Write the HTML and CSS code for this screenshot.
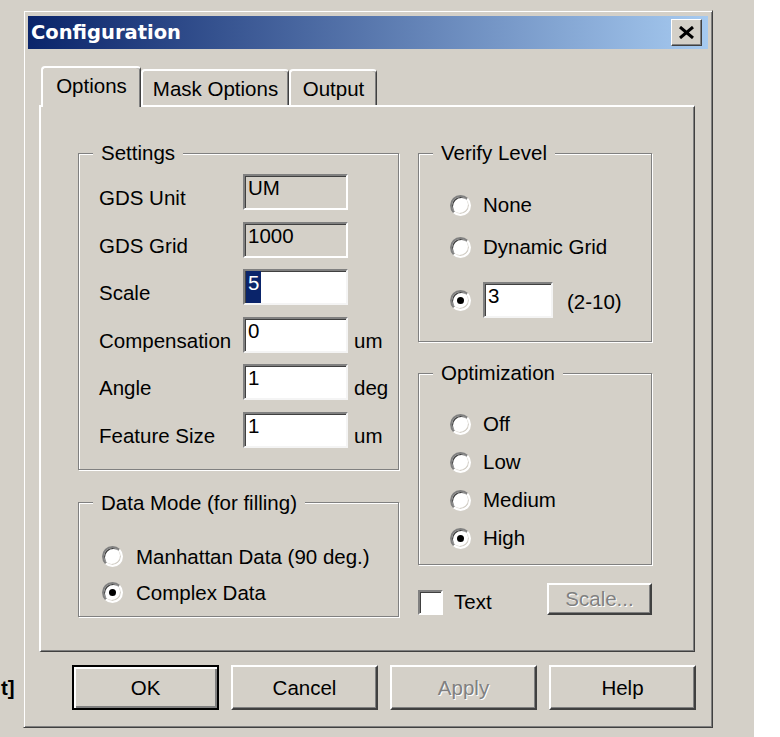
FILE: index.html
```html
<!DOCTYPE html>
<html lang="en">
<head>
<meta charset="UTF-8" />
<title>Configuration</title>
<link rel="stylesheet" href="styles.css">
</head>
<body>
<div class="desktop">
  <!-- Window behind the dialog -->
  <div class="behind"><span class="behind-text">t]</span></div>

  <div class="dialog">
    <div class="titlebar">
      <span class="title">Configuration</span>
      <div class="close-btn">
        <svg width="17" height="13" viewBox="0 0 17 13"><path d="M2 1 L15 12 M15 1 L2 12" stroke="#000" stroke-width="3" fill="none"/></svg>
      </div>
    </div>

    <!-- Tabs -->
    <div class="tabs">
      <div class="tab tab-options active">Options</div>
      <div class="tab tab-mask">Mask Options</div>
      <div class="tab tab-output">Output</div>
    </div>

    <div class="tab-panel">
      <div class="col-left">
        <fieldset class="group settings">
          <legend>Settings</legend>
          <div class="settings-grid">
            <span class="row-label">GDS Unit</span><div class="field disabled">UM</div><span></span>
            <span class="row-label">GDS Grid</span><div class="field disabled">1000</div><span></span>
            <span class="row-label">Scale</span><div class="field"><span class="selected">5</span></div><span></span>
            <span class="row-label">Compensation</span><div class="field">0</div><span class="unit">um</span>
            <span class="row-label">Angle</span><div class="field">1</div><span class="unit">deg</span>
            <span class="row-label">Feature Size</span><div class="field">1</div><span class="unit">um</span>
          </div>
        </fieldset>

        <fieldset class="group data-mode">
          <legend>Data Mode (for filling)</legend>
          <div class="radio-list">
            <div class="radio-row"><span class="radio"></span>Manhattan Data (90 deg.)</div>
            <div class="radio-row"><span class="radio checked"></span>Complex Data</div>
          </div>
        </fieldset>
      </div>

      <div class="col-right">
        <fieldset class="group verify">
          <legend>Verify Level</legend>
          <div class="radio-list">
            <div class="radio-row"><span class="radio"></span>None</div>
            <div class="radio-row"><span class="radio"></span>Dynamic Grid</div>
            <div class="radio-row level-row"><span class="radio checked"></span><div class="field level-field">3</div><span class="range">(2-10)</span></div>
          </div>
        </fieldset>

        <fieldset class="group optimization">
          <legend>Optimization</legend>
          <div class="radio-list">
            <div class="radio-row"><span class="radio"></span>Off</div>
            <div class="radio-row"><span class="radio"></span>Low</div>
            <div class="radio-row"><span class="radio"></span>Medium</div>
            <div class="radio-row"><span class="radio checked"></span>High</div>
          </div>
        </fieldset>

        <div class="text-row">
          <span class="checkbox"></span>
          <span class="check-label">Text</span>
          <div class="btn btn-scale disabled">Scale...</div>
        </div>
      </div>
    </div>

    <!-- Dialog buttons -->
    <div class="buttons">
      <div class="btn default">OK</div>
      <div class="btn">Cancel</div>
      <div class="btn disabled">Apply</div>
      <div class="btn">Help</div>
    </div>
  </div>
</div>
</body>
</html>
```

FILE: styles.css
```css
body {
  margin: 0;
  background: #fff;
  font-family: "Liberation Sans", Arial, sans-serif;
  font-size: 20.5px;
  color: #000;
}
.desktop {
  width: 754px;
  height: 737px;
  background: #d4d0c8;
  display: flex;
  overflow: hidden;
}
.behind {
  width: 23px;
  flex: none;
  overflow: hidden;
  padding-top: 676px;
  box-sizing: border-box;
}
.behind-text {
  display: block;
  margin-left: 1px;
  font-weight: bold;
  white-space: nowrap;
}
/* Dialog frame */
.dialog {
  width: 690px;
  height: 718px;
  flex: none;
  margin-top: 10px;
  box-sizing: border-box;
  border: 1px solid;
  border-color: #d4d0c8 #404040 #404040 #d4d0c8;
  box-shadow: inset 1px 1px 0 #fff, inset -1px -1px 0 #808080;
  padding: 5px 4px;
}
.titlebar {
  height: 33px;
  display: flex;
  align-items: center;
  justify-content: space-between;
  padding: 0 6px 0 3px;
  background: linear-gradient(to right, #0a246a, #a6caf0);
}
.title {
  font-family: "DejaVu Sans", sans-serif;
  font-weight: bold;
  font-size: 19.5px;
  color: #fff;
}
.close-btn {
  width: 31px;
  height: 27px;
  box-sizing: border-box;
  background: #d4d0c8;
  border: 1px solid;
  border-color: #fff #404040 #404040 #fff;
  box-shadow: inset -1px -1px 0 #808080;
  display: flex;
  align-items: center;
  justify-content: center;
}
/* Tabs */
.tabs {
  display: flex;
  align-items: flex-end;
  margin: 17px 0 0 13px;
  position: relative;
  z-index: 1;
}
.tab {
  height: 36px;
  box-sizing: border-box;
  background: #d4d0c8;
  border-top: 2px solid #fff;
  border-left: 2px solid #fff;
  border-right: 1px solid #404040;
  border-radius: 4px 4px 0 0;
  box-shadow: inset -1px 0 0 #808080;
  display: flex;
  align-items: center;
  justify-content: center;
  padding-top: 2px;
}
.tab.active {
  height: 41px;
  margin-bottom: -2px;
  padding: 0 0 3px;
}
.tab-options { width: 100px; }
.tab-mask { width: 148px; }
.tab-output { width: 88px; }
.tab-panel {
  margin-left: 11px;
  width: 656px;
  height: 547px;
  box-sizing: border-box;
  border-style: solid;
  border-width: 2px 1px 1px 2px;
  border-color: #fff #404040 #404040 #fff;
  box-shadow: inset -1px -1px 0 #808080;
  padding: 34px 0 0 37px;
  display: flex;
  gap: 19px;
}
.col-left {
  width: 321px;
  display: flex;
  flex-direction: column;
}
.col-right {
  width: 234px;
  display: flex;
  flex-direction: column;
}
/* Group boxes */
.group {
  margin: 0;
  padding: 0;
  min-inline-size: 0;
  border: 1px solid #808080;
  box-shadow: 1px 1px 0 #fff, inset 1px 1px 0 #fff;
}
.group legend {
  padding: 0 8px;
  line-height: 24px;
  background: #d4d0c8;
}
.settings {
  padding: 9px 0 21px 20px;
}
.settings legend { margin-left: -6px; }
.settings-grid {
  display: grid;
  grid-template-columns: 144px 105px auto;
  grid-auto-rows: 36px;
  row-gap: 11.6px;
  align-items: center;
}
.row-label, .unit { padding-top: 12px; }
.unit { padding-left: 6px; }
.data-mode {
  margin-top: 21px;
  padding: 30px 0 11px 23px;
}
.data-mode legend { margin-left: -9px; }
.data-mode .radio-list { gap: 12px; }
.data-mode .radio-row { height: 24px; gap: 13px; }
.verify {
  padding: 26px 0 23px 31px;
}
.verify legend, .optimization legend { margin-left: -17px; }
.verify .radio-list { gap: 14px; }
.verify .level-row { height: 36px; margin-top: 7px; }
.optimization {
  margin-top: 19px;
  padding: 25px 0 12px 31px;
}
.optimization .radio-list { gap: 10px; }
/* Fields */
.field {
  height: 36px;
  box-sizing: border-box;
  background: #fff;
  border: 2px solid;
  border-color: #808080 #f4f4f4 #f4f4f4 #808080;
  box-shadow: inset 1px 1px 0 #404040;
  padding: 0 3px;
  line-height: 24px;
  display: flex;
  align-items: stretch;
  white-space: nowrap;
}
.field.disabled { background: #d4d0c8; border-color: #808080 #fff #fff #808080; }
.selected {
  background: #0a246a;
  color: #fff;
  padding: 0 2px;
  margin-left: -2px;
}
.level-field { width: 70px; }
.range { margin-left: 2px; padding-top: 4px; }
/* Radios and checkbox */
.radio-list {
  display: flex;
  flex-direction: column;
}
.radio-row {
  height: 28px;
  display: flex;
  align-items: center;
  gap: 12px;
}
.radio {
  width: 21px;
  height: 21px;
  flex: none;
  box-sizing: border-box;
  border-radius: 50%;
  background: #fff;
  border: 2px solid;
  border-color: #808080 #fff #fff #808080;
  box-shadow: inset 1px 1px 0 #404040, inset -1px -1px 0 #d4d0c8;
  position: relative;
}
.radio.checked::after {
  content: "";
  position: absolute;
  left: 50%;
  top: 50%;
  width: 7px;
  height: 7px;
  margin: -3.5px 0 0 -3.5px;
  border-radius: 50%;
  background: #000;
}
.text-row {
  margin-top: 18px;
  height: 32px;
  display: flex;
  align-items: center;
}
.checkbox {
  width: 25px;
  height: 25px;
  margin-top: 6px;
  box-sizing: border-box;
  background: #fff;
  border: 2px solid;
  border-color: #808080 #fff #fff #808080;
  box-shadow: inset 1px 1px 0 #404040;
}
.check-label { margin: 6px 0 0 11px; }
/* Buttons */
.btn {
  width: 147px;
  height: 45px;
  box-sizing: border-box;
  background: #d4d0c8;
  border-style: solid;
  border-width: 2px;
  border-color: #fff #404040 #404040 #fff;
  box-shadow: inset -1px -1px 0 #808080;
  display: flex;
  align-items: center;
  justify-content: center;
}
.btn.default {
  border-color: #000;
  box-shadow: inset 2px 2px 0 #fff, inset -2px -2px 0 #808080;
}
.btn.disabled {
  color: #808080;
  text-shadow: 1px 1px 0 #fff;
}
.btn-scale {
  width: 105px;
  height: 32px;
  margin-left: auto;
}
.buttons {
  display: flex;
  gap: 12px;
  margin: 13px 0 0 44px;
}
```
